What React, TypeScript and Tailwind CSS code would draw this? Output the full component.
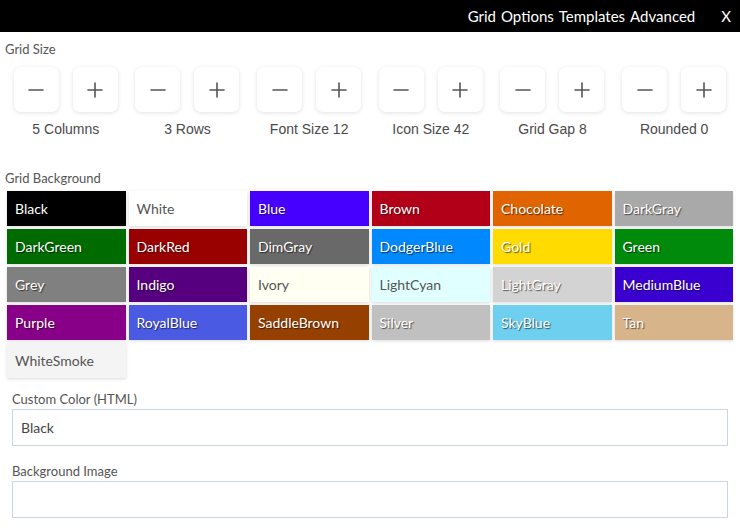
import React from "react";
import { Minus, Plus } from "lucide-react";

const controls = ["5 Columns", "3 Rows", "Font Size 12", "Icon Size 42", "Grid Gap 8", "Rounded 0"];

const swatches: { name: string; bg: string; light?: boolean }[] = [
  { name: "Black", bg: "#000000" },
  { name: "White", bg: "#ffffff", light: true },
  { name: "Blue", bg: "#4600ff" },
  { name: "Brown", bg: "#b30019" },
  { name: "Chocolate", bg: "#e06400" },
  { name: "DarkGray", bg: "#a9a9a9" },
  { name: "DarkGreen", bg: "#006b00" },
  { name: "DarkRed", bg: "#990000" },
  { name: "DimGray", bg: "#696969" },
  { name: "DodgerBlue", bg: "#0088ff" },
  { name: "Gold", bg: "#ffdb00" },
  { name: "Green", bg: "#008a0b" },
  { name: "Grey", bg: "#808080" },
  { name: "Indigo", bg: "#560080" },
  { name: "Ivory", bg: "#fffff2", light: true },
  { name: "LightCyan", bg: "#e0ffff", light: true },
  { name: "LightGray", bg: "#d3d3d3" },
  { name: "MediumBlue", bg: "#3a00d0" },
  { name: "Purple", bg: "#880088" },
  { name: "RoyalBlue", bg: "#4a5ae2" },
  { name: "SaddleBrown", bg: "#964000" },
  { name: "Silver", bg: "#c0c0c0" },
  { name: "SkyBlue", bg: "#6ecfef" },
  { name: "Tan", bg: "#d7b48a" },
  { name: "WhiteSmoke", bg: "#f4f4f4", light: true },
];

function RoundBtn({ children }: { children: React.ReactNode }) {
  return (
    <div className="w-[45px] h-[45px] rounded-[7px] bg-white shadow-[0_1px_4px_rgba(0,0,0,0.12)] flex items-center justify-center text-[#555]">
      {children}
    </div>
  );
}

export default function App() {
  return (
    <div className="w-[740px] h-[531px] bg-white overflow-hidden font-['Lato',sans-serif]">
      <div className="h-8 bg-black flex items-center justify-end text-white text-[15px] pr-[9px]">
        <span>Grid</span>
        <span className="ml-[5px]">Options</span>
        <span className="ml-[5px]">Templates</span>
        <span className="ml-[5px]">Advanced</span>
        <span className="ml-[26px]">X</span>
      </div>

      <div className="px-[5px] pt-[9px] text-[13px] text-[#555] leading-4">Grid Size</div>

      <div className="px-[5px] mt-[10px] grid grid-cols-6">
        {controls.map((c) => (
          <div key={c} className="flex flex-col items-center">
            <div className="flex gap-[14px]">
              <RoundBtn>
                <Minus size={24} strokeWidth={1.6} />
              </RoundBtn>
              <RoundBtn>
                <Plus size={24} strokeWidth={1.6} />
              </RoundBtn>
            </div>
            <div className="mt-[9px] text-[14px] leading-4 text-[#4a4a4a] font-['Liberation_Sans',Arial,sans-serif]">
              {c}
            </div>
          </div>
        ))}
      </div>

      <div className="px-[5px] mt-[33px] text-[13px] text-[#555] leading-4">Grid Background</div>

      <div className="mx-[7px] mt-[5px] grid grid-cols-6 gap-x-[3px] gap-y-[3px]">
        {swatches.map((s) => (
          <div
            key={s.name}
            className={
              "h-[35px] flex items-center pl-2 text-[14px] shadow-[0_1px_3px_rgba(0,0,0,0.15)] " +
              (s.light ? "text-[#555]" : "text-white [text-shadow:1px_1px_1px_rgba(0,0,0,0.6)]")
            }
            style={{ backgroundColor: s.bg }}
          >
            {s.name}
          </div>
        ))}
      </div>

      <div className="px-3 mt-[13px] text-[13px] text-[#555] leading-4">Custom Color (HTML)</div>
      <div className="mx-3 mt-[2px] h-[37px] border border-[#c9d4e4] flex items-center px-2 text-[14px] text-[#444]">
        Black
      </div>

      <div className="px-3 mt-[17px] text-[13px] text-[#555] leading-4">Background Image</div>
      <div className="mx-3 mt-[2px] h-[37px] border border-[#c9d4e4]"></div>
    </div>
  );
}
